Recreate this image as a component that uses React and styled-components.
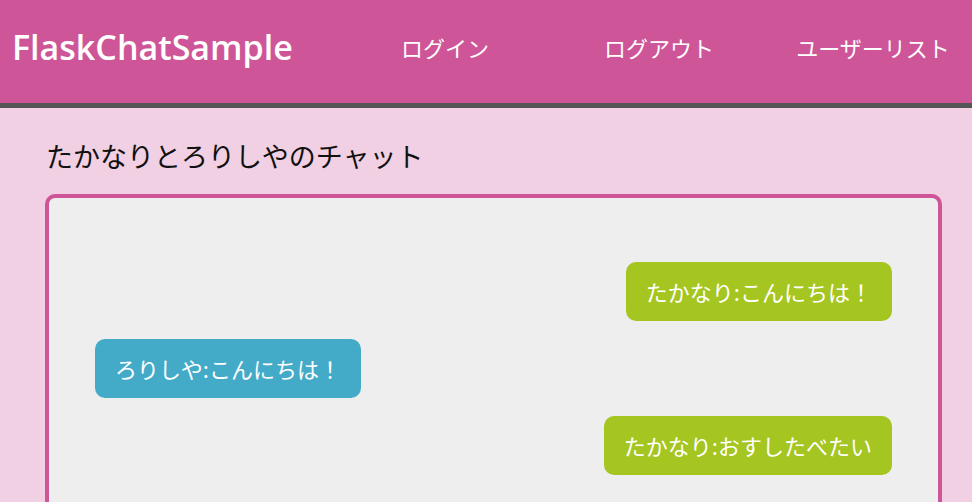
import React from 'react';
import styled, { createGlobalStyle } from 'styled-components';

const GlobalStyle = createGlobalStyle`
  html, body {
    margin: 0;
    padding: 0;
    background: #f2d0e4;
    overflow: hidden;
  }
  body {
    font-family: "Noto Sans CJK JP", "Noto Sans", sans-serif;
  }
`;

const HeaderBar = styled.header`
  box-sizing: border-box;
  display: flex;
  align-items: center;
  height: 108px;
  padding-bottom: 10px;
  background: #ce5698;
  border-bottom: 5px solid #555555;
  color: #ffffff;
`;

const Logo = styled.div`
  box-sizing: border-box;
  width: 338px;
  flex: none;
  padding-left: 12px;
  font-family: "Open Sans", "Noto Sans", sans-serif;
  font-size: 34px;
  font-weight: 600;
`;

const Nav = styled.nav`
  display: flex;
  flex: none;
`;

const NavItem = styled.a`
  width: 214px;
  flex: none;
  text-align: center;
  font-size: 22px;
  color: #ffffff;
  text-decoration: none;
  cursor: pointer;
`;

const Main = styled.main`
  padding: 30px 30px 0 45px;
`;

const Title = styled.h2`
  margin: 0 0 20px 1px;
  font-size: 27px;
  font-weight: 400;
  line-height: 36px;
  color: #111111;
`;

const ChatBox = styled.div`
  display: flex;
  flex-direction: column;
  gap: 18px;
  min-height: 400px;
  padding: 64px 46px 20px 46px;
  background: #eeeeee;
  border: 4px solid #ce5698;
  border-radius: 10px;
`;

const Bubble = styled.div`
  align-self: ${(p) => (p.mine ? 'flex-end' : 'flex-start')};
  padding: 16px 20px;
  font-size: 22px;
  line-height: 27px;
  color: #ffffff;
  background: ${(p) => (p.mine ? '#a5c520' : '#43aac8')};
  border-radius: 10px;
`;

const messages = [
  { user: 'たかなり', text: 'こんにちは！', mine: true },
  { user: 'ろりしや', text: 'こんにちは！', mine: false },
  { user: 'たかなり', text: 'おすしたべたい', mine: true },
];

const App = () => {
  return (
    <>
      <GlobalStyle />
      <HeaderBar>
        <Logo>FlaskChatSample</Logo>
        <Nav>
          <NavItem>ログイン</NavItem>
          <NavItem>ログアウト</NavItem>
          <NavItem>ユーザーリスト</NavItem>
        </Nav>
      </HeaderBar>
      <Main>
        <Title>たかなりとろりしやのチャット</Title>
        <ChatBox>
          {messages.map((m, i) => (
            <Bubble key={i} mine={m.mine}>
              {m.user}:{m.text}
            </Bubble>
          ))}
        </ChatBox>
      </Main>
    </>
  );
};

export default App;
